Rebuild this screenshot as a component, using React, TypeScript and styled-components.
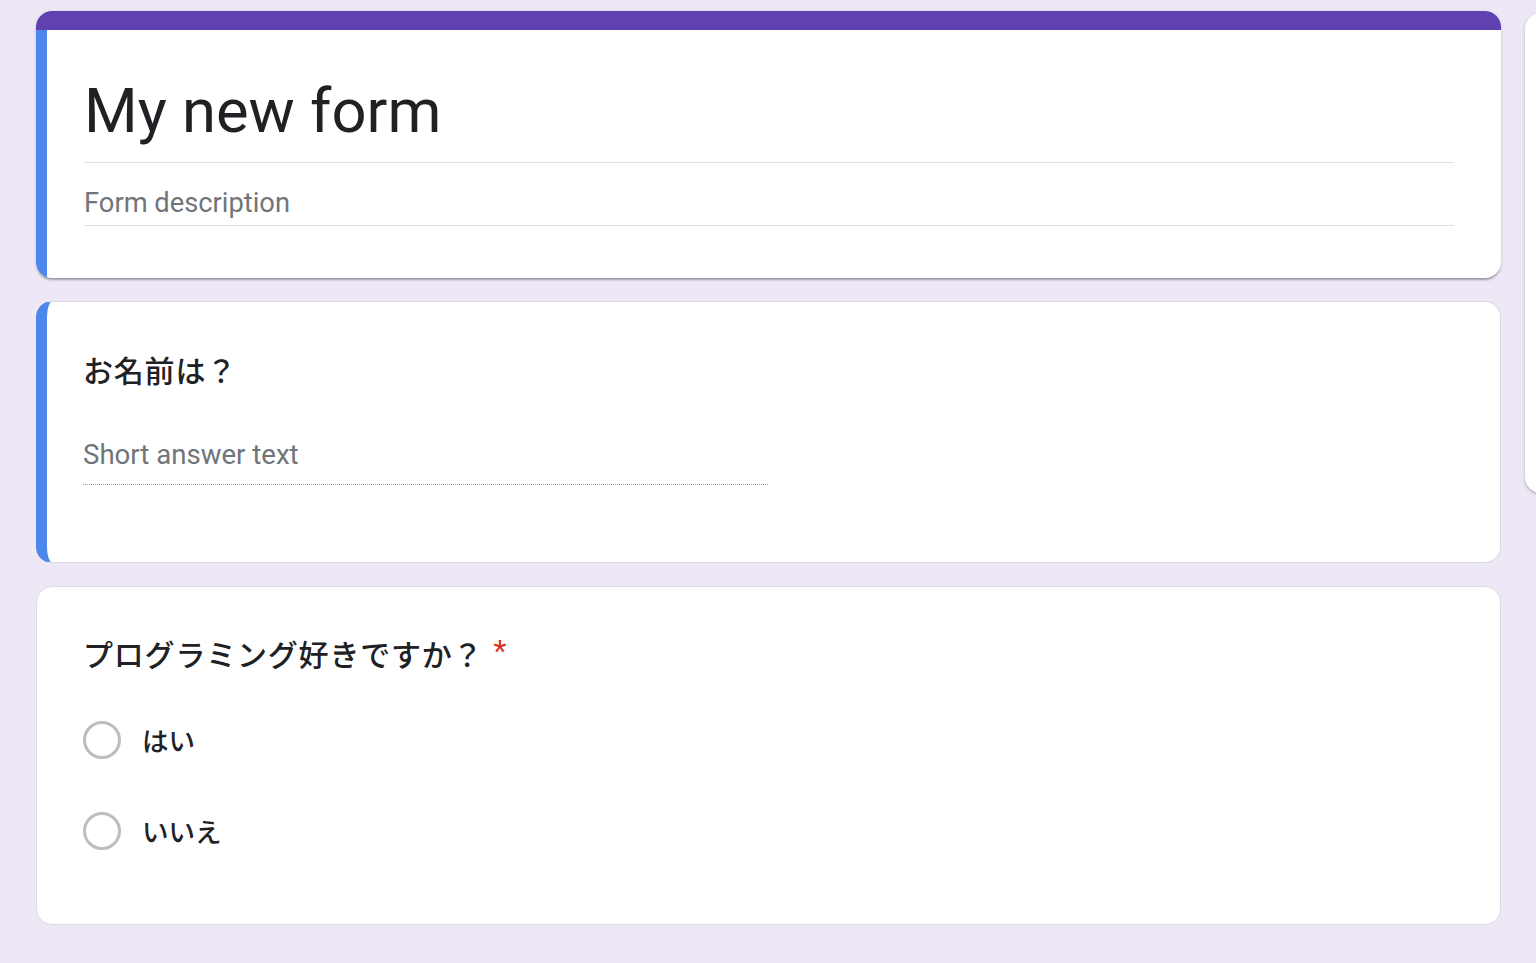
import React from 'react';
import styled, { createGlobalStyle } from 'styled-components';

const GlobalStyle = createGlobalStyle`
  html, body {
    margin: 0;
    padding: 0;
    background: #ede7f6;
    overflow: hidden;
  }
  body {
    font-family: Roboto, "Noto Sans CJK JP", sans-serif;
    color: #202124;
  }
`;

const Page = styled.div`
  display: flex;
  align-items: flex-start;
  gap: 24px;
  padding: 11px 0 0 36px;
  width: 100%;
  height: 963px;
  box-sizing: border-box;
  overflow: hidden;
`;

const Column = styled.div`
  display: flex;
  flex-direction: column;
  gap: 23px;
  width: 1465px;
  flex-shrink: 0;
`;

// floating side toolbar, only its left edge shows in the frame
const Toolbar = styled.div`
  width: 100px;
  height: 480px;
  margin-top: 2px;
  background: #ffffff;
  border-radius: 16px;
  box-shadow: 0 2px 2px rgba(0, 0, 0, 0.14), 0 1px 5px rgba(0, 0, 0, 0.12);
  flex-shrink: 0;
`;

const HeaderCard = styled.div`
  background: #ffffff;
  border-radius: 16px;
  overflow: hidden;
  box-shadow: 0 3px 2px -1px rgba(0, 0, 0, 0.28), 0 1px 4px rgba(0, 0, 0, 0.12);
`;

const TopBand = styled.div`
  height: 19px;
  background: #6141b0;
`;

const HeaderBody = styled.div`
  border-left: 11px solid #4d86ec;
  padding: 43px 47px 52px 37px;
`;

const Title = styled.div`
  font-family: Roboto, sans-serif;
  font-size: 61.5px;
  line-height: 76px;
  font-weight: 400;
  color: #202124;
  padding-bottom: 13px;
  border-bottom: 1px solid #e0e0e0;
`;

const Description = styled.div`
  margin-top: 22px;
  font-family: Roboto, sans-serif;
  font-size: 27.3px;
  line-height: 36px;
  color: #70757a;
  padding-bottom: 4px;
  border-bottom: 1px solid #e0e0e0;
`;

const QuestionCard = styled.div<{ $active?: boolean }>`
  background: #ffffff;
  border: 1px solid #dadce0;
  border-left: ${(p) => (p.$active ? '11px solid #4d86ec' : '1px solid #dadce0')};
  border-radius: 16px;
  padding: ${(p) => (p.$active ? '45px 47px 77px 36px' : '44px 47px 74px 46px')};
`;

const QuestionTitle = styled.div`
  font-family: "Noto Sans CJK JP", sans-serif;
  font-size: 30px;
  font-weight: 500;
  letter-spacing: 0.8px;
  line-height: 44px;
  color: #202124;
  display: flex;
  align-items: center;
`;

const Required = styled.span`
  font-family: Roboto, sans-serif;
  font-weight: 400;
  color: #d93025;
  margin-left: 10px;
  font-size: 30px;
  align-self: flex-start;
  line-height: 40px;
`;

const ShortAnswer = styled.div`
  margin-top: 44px;
  width: 685px;
  font-family: Roboto, sans-serif;
  font-size: 27.6px;
  line-height: 40px;
  color: #70757a;
  padding-bottom: 9px;
  border-bottom: 1px dotted #9aa0a6;
`;

const Options = styled.div`
  margin-top: 46px;
  display: flex;
  flex-direction: column;
  gap: 53px;
`;

const OptionRow = styled.label`
  display: flex;
  align-items: center;
  gap: 21px;
`;

const Radio = styled.span`
  width: 38px;
  height: 38px;
  box-sizing: border-box;
  border: 3.5px solid #bdbdbd;
  border-radius: 50%;
  flex-shrink: 0;
`;

const OptionLabel = styled.span`
  font-family: "Noto Sans CJK JP", sans-serif;
  font-size: 26.5px;
  font-weight: 500;
  line-height: 38px;
  color: #202124;
`;

const choices = ['はい', 'いいえ'];

export default function App() {
  return (
    <>
      <GlobalStyle />
      <Page>
        <Column>
          <HeaderCard>
            <TopBand />
            <HeaderBody>
              <Title>My new form</Title>
              <Description>Form description</Description>
            </HeaderBody>
          </HeaderCard>

          <QuestionCard $active>
            <QuestionTitle>お名前は？</QuestionTitle>
            <ShortAnswer>Short answer text</ShortAnswer>
          </QuestionCard>

          <QuestionCard>
            <QuestionTitle>
              プログラミング好きですか？
              <Required>*</Required>
            </QuestionTitle>
            <Options>
              {choices.map((c) => (
                <OptionRow key={c}>
                  <Radio />
                  <OptionLabel>{c}</OptionLabel>
                </OptionRow>
              ))}
            </Options>
          </QuestionCard>
        </Column>
        <Toolbar />
      </Page>
    </>
  );
}
